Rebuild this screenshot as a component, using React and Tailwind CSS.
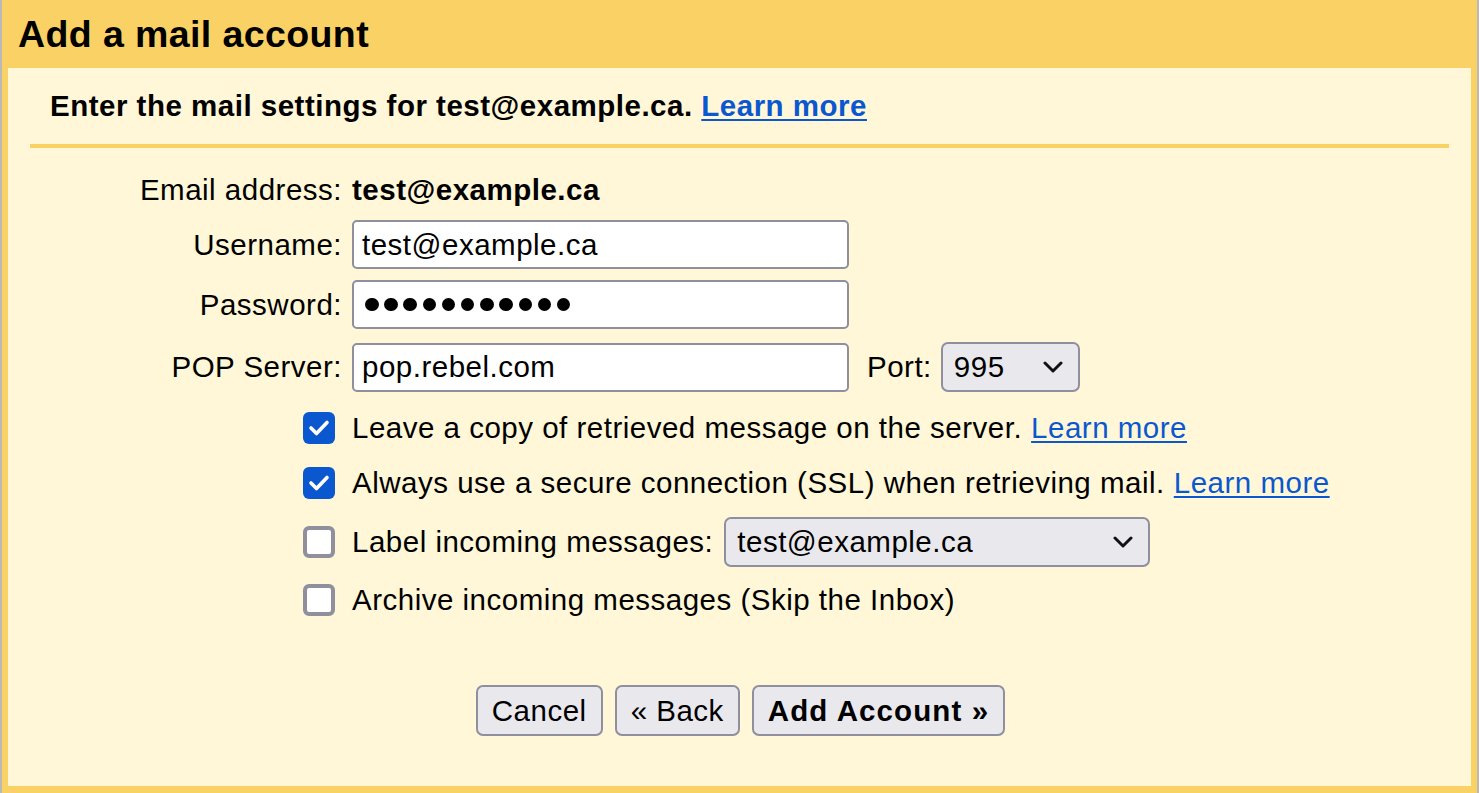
const FONT = { fontFamily: '"Liberation Sans", Arial, sans-serif' };

function Chevron() {
  return (
    <svg width="20" height="12" viewBox="0 0 20 12" className="shrink-0">
      <polyline points="2,2 10,10 18,2" fill="none" stroke="#111" strokeWidth="3" strokeLinecap="round" strokeLinejoin="round" />
    </svg>
  );
}

function Check({ on }) {
  if (on) {
    return (
      <span className="flex h-[32px] w-[32px] shrink-0 items-center justify-center rounded-[6px] bg-[#0b57d0]">
        <svg width="22" height="18" viewBox="0 0 22 18">
          <polyline points="3,9 8.5,14.5 19,3.5" fill="none" stroke="#fff" strokeWidth="3.6" strokeLinecap="round" strokeLinejoin="round" />
        </svg>
      </span>
    );
  }
  return <span className="block h-[32px] w-[32px] shrink-0 rounded-[6px] border-[4px] border-[#8f8f9d] bg-white" />;
}

function Label({ children }) {
  return <div className="w-[344px] shrink-0 pr-[10px] text-right">{children}</div>;
}

function TextBox({ children }) {
  return (
    <div className="flex h-[49px] w-[497px] items-center rounded-[5px] border-2 border-[#8f8f9d] bg-white px-[8px]">
      {children}
    </div>
  );
}

function Select({ width, children }) {
  return (
    <div className={`flex h-[50px] items-center justify-between rounded-[7px] border-2 border-[#8f8f9d] bg-[#e9e9ed] pl-[11px] pr-[15px] ${width}`}>
      <span>{children}</span>
      <Chevron />
    </div>
  );
}

function Button({ bold, children }) {
  return (
    <div className={`flex h-[51px] items-center rounded-[7px] border-2 border-[#8f8f9d] bg-[#e9e9ed] px-[14px] ${bold ? 'font-bold tracking-[1.1px]' : ''}`}>
      {children}
    </div>
  );
}

const OPTIONS = [
  { on: true, text: 'Leave a copy of retrieved message on the server.', link: true, h: 'h-[55px]' },
  { on: true, text: 'Always use a secure connection (SSL) when retrieving mail.', link: true, h: 'h-[56px]' },
  { on: false, text: 'Label incoming messages:', select: true, h: 'h-[62px]' },
  { on: false, text: 'Archive incoming messages (Skip the Inbox)', h: 'h-[54px]' },
];

export default function App() {
  return (
    <div className="flex h-[793px] w-full flex-col border-l-2 border-r-2 border-[#b9b9b9] bg-[#fad165] text-black" style={FONT}>
      <div className="flex h-[68px] items-center pl-[16px] pt-[2px] text-[37.5px] font-bold leading-none tracking-[0.4px]">
        Add a mail account
      </div>
      <div className="mx-[6px] mb-[7px] flex-1 bg-[#fff7d7] px-[22px] text-[29.5px] tracking-[0.5px]">
        <div className="flex h-[76px] items-center pl-[20px] font-bold">
          Enter the mail settings for test@example.ca.&nbsp;
          <span className="text-[#0b57d0] underline underline-offset-[3px]">Learn more</span>
        </div>
        <div className="h-[4px] bg-[#fad165]" />

        <div className="-ml-[22px] leading-none">
          <div className="flex h-[70px] items-center pt-[14px]">
            <Label>Email address:</Label>
            <span className="font-bold">test@example.ca</span>
          </div>
          <div className="mt-[2px] flex items-center">
            <Label>Username:</Label>
            <TextBox>test@example.ca</TextBox>
          </div>
          <div className="mt-[11px] flex items-center">
            <Label>Password:</Label>
            <TextBox>
              <div className="flex gap-[5.7px] pl-[3px]">
                {Array.from({ length: 11 }).map((_, i) => (
                  <span key={i} className="block h-[13.5px] w-[13.5px] rounded-full bg-black" />
                ))}
              </div>
            </TextBox>
          </div>
          <div className="mt-[13px] flex items-center">
            <Label>POP Server:</Label>
            <TextBox>pop.rebel.com</TextBox>
            <span className="ml-[18px] mr-[9px]">Port:</span>
            <Select width="w-[139px]">995</Select>
          </div>

          <div className="mt-[8px] flex flex-col pl-[295px]">
            {OPTIONS.map((o, i) => (
              <div key={i} className={`flex items-center gap-[17px] ${o.h}`}>
                <Check on={o.on} />
                <span className="whitespace-nowrap">{o.text}</span>
                {o.link && (
                  <span className="-ml-[8px] text-[#0b57d0] underline underline-offset-[3px]">Learn more</span>
                )}
                {o.select && (
                  <div className="-ml-[6px]">
                    <Select width="w-[426px]">test@example.ca</Select>
                  </div>
                )}
              </div>
            ))}
          </div>

          <div className="mt-[58px] flex justify-center gap-[12px] pl-[24px]">
            <Button>Cancel</Button>
            <Button>« Back</Button>
            <Button bold>Add Account »</Button>
          </div>
        </div>
      </div>
    </div>
  );
}
